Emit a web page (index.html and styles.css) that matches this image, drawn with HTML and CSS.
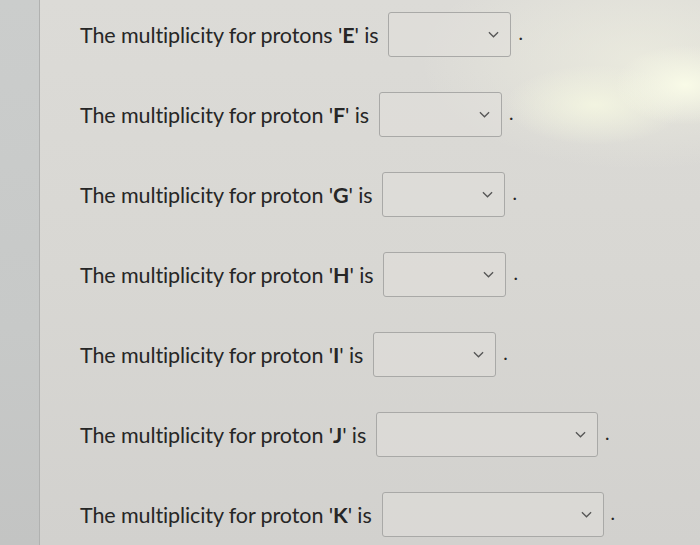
FILE: index.html
```html
<!DOCTYPE html>
<html>
<head>
<meta charset="utf-8">
<link rel="stylesheet" href="styles.css">
</head>
<body>
<div class="screen">
  <aside class="side"></aside>
  <main class="main">
    <div class="row">
      <span class="label">The multiplicity for protons '<b>E</b>' is</span>
      <span class="select"><svg class="chev" viewBox="0 0 12 7" width="11" height="7"><path d="M1 1 L6 6 L11 1" fill="none" stroke="#555" stroke-width="1.4"/></svg></span>
      <span class="dot">.</span>
    </div>
    <div class="row">
      <span class="label">The multiplicity for proton '<b>F</b>' is</span>
      <span class="select"><svg class="chev" viewBox="0 0 12 7" width="11" height="7"><path d="M1 1 L6 6 L11 1" fill="none" stroke="#555" stroke-width="1.4"/></svg></span>
      <span class="dot">.</span>
    </div>
    <div class="row">
      <span class="label">The multiplicity for proton '<b>G</b>' is</span>
      <span class="select"><svg class="chev" viewBox="0 0 12 7" width="11" height="7"><path d="M1 1 L6 6 L11 1" fill="none" stroke="#555" stroke-width="1.4"/></svg></span>
      <span class="dot">.</span>
    </div>
    <div class="row">
      <span class="label">The multiplicity for proton '<b>H</b>' is</span>
      <span class="select"><svg class="chev" viewBox="0 0 12 7" width="11" height="7"><path d="M1 1 L6 6 L11 1" fill="none" stroke="#555" stroke-width="1.4"/></svg></span>
      <span class="dot">.</span>
    </div>
    <div class="row">
      <span class="label">The multiplicity for proton '<b>I</b>' is</span>
      <span class="select"><svg class="chev" viewBox="0 0 12 7" width="11" height="7"><path d="M1 1 L6 6 L11 1" fill="none" stroke="#555" stroke-width="1.4"/></svg></span>
      <span class="dot">.</span>
    </div>
    <div class="row">
      <span class="label">The multiplicity for proton '<b>J</b>' is</span>
      <span class="select wide"><svg class="chev" viewBox="0 0 12 7" width="11" height="7"><path d="M1 1 L6 6 L11 1" fill="none" stroke="#555" stroke-width="1.4"/></svg></span>
      <span class="dot">.</span>
    </div>
    <div class="row">
      <span class="label">The multiplicity for proton '<b>K</b>' is</span>
      <span class="select wide"><svg class="chev" viewBox="0 0 12 7" width="11" height="7"><path d="M1 1 L6 6 L11 1" fill="none" stroke="#555" stroke-width="1.4"/></svg></span>
      <span class="dot">.</span>
    </div>
  </main>
</div>
</body>
</html>
```
FILE: styles.css
```css
html, body {
  margin: 0;
  padding: 0;
  width: 700px;
  height: 545px;
  overflow: hidden;
}
.screen {
  display: flex;
  width: 700px;
  height: 545px;
  font-family: Lato, "Open Sans", sans-serif;
  color: #262626;
}
.side {
  width: 39px;
  flex: none;
  background: linear-gradient(180deg, #cbcdcc 0%, #c7c9c8 60%, #c3c4c3 100%);
  border-right: 1px solid #b0b1b0;
}
.main {
  flex: 1;
  display: flex;
  flex-direction: column;
  gap: 35px;
  padding: 12px 0 0 40px;
  background:
    radial-gradient(ellipse 70px 40px at 645px 85px, rgba(250,252,232,0.95), rgba(250,252,232,0) 100%),
    radial-gradient(ellipse 90px 40px at 555px 105px, rgba(246,248,226,0.8), rgba(246,248,226,0) 100%),
    radial-gradient(ellipse 220px 110px at 600px 60px, rgba(240,240,225,0.7), rgba(240,240,225,0) 100%),
    linear-gradient(180deg, #dcdbd7 0%, #d8d7d3 50%, #d2d1ce 100%);
}
.row {
  display: flex;
  align-items: center;
  height: 45px;
}
.label {
  font-size: 21.5px;
  letter-spacing: -0.1px;
  margin-right: 10px;
}
.label b {
  font-weight: 700;
}
.select {
  box-sizing: border-box;
  width: 123px;
  height: 45px;
  border: 1px solid #a9a9a7;
  border-radius: 3px;
  background: rgba(225,224,220,0.5);
  display: flex;
  align-items: center;
  justify-content: flex-end;
  padding-right: 11px;
}
.select.wide {
  width: 222px;
}
.chev {
  display: block;
}
.dot {
  font-size: 19px;
  margin-left: 7px;
  margin-top: -4px;
}
```
